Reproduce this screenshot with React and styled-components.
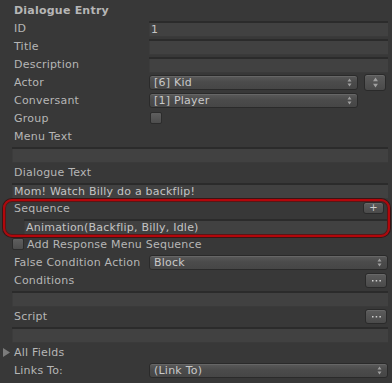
import React from 'react';
import styled, { createGlobalStyle } from 'styled-components';

const GlobalStyle = createGlobalStyle`
  html, body {
    margin: 0;
    padding: 0;
    background: #383838;
  }
  body {
    font-family: "DejaVu Sans", Verdana, sans-serif;
    font-size: 11px;
    letter-spacing: 0.22px;
    color: #b6b6b6;
  }
`;

const Panel = styled.div`
  width: 392px;
  height: 383px;
  box-sizing: border-box;
  padding: 1px 4px 0 12px;
  display: flex;
  flex-direction: column;
  overflow: hidden;
`;

const Row = styled.div`
  height: 18px;
  display: flex;
  align-items: center;
  flex-shrink: 0;
  padding-left: ${(p) => p.$indent || 0}px;
`;

const Label = styled.span`
  width: 137px;
  padding-left: 2px;
  box-sizing: border-box;
  white-space: nowrap;
  font-weight: ${(p) => (p.$bold ? 'bold' : 'normal')};
  flex: ${(p) => (p.$grow ? 1 : '0 0 137px')};
`;

const TextField = styled.div`
  flex: 1;
  height: 16px;
  box-sizing: border-box;
  background: #414141;
  border-top: 2px solid #2b2b2b;
  border-bottom: 1px solid #3a3a3a;
  box-shadow: inset 1px 0 0 #3c3c3c;
  color: #c4c4c4;
  padding: 0 2px;
  line-height: 13px;
  white-space: nowrap;
  overflow: hidden;
  margin-top: 1px;
`;

const Popup = styled.div`
  flex: ${(p) => (p.$width ? `0 0 ${p.$width}px` : 1)};
  height: 15px;
  box-sizing: border-box;
  border-radius: 3px;
  border: 1px solid #2a2a2a;
  background: linear-gradient(#5a5a5a, #4b4b4b 45%, #464646);
  box-shadow: inset 0 1px 0 #666;
  color: #c9c9c9;
  display: flex;
  align-items: center;
  justify-content: space-between;
  padding: 0 5px 0 4px;
  line-height: 13px;
  white-space: nowrap;
`;

const SmallButton = styled.div`
  width: ${(p) => p.$w || 22}px;
  height: ${(p) => p.$h || 14}px;
  box-sizing: border-box;
  border-radius: 3px;
  border: 1px solid #2a2a2a;
  background: linear-gradient(#5c5c5c, #4a4a4a);
  box-shadow: inset 0 1px 0 #686868;
  color: #d0d0d0;
  display: flex;
  align-items: center;
  justify-content: center;
  margin-left: auto;
  margin-right: ${(p) => p.$mr || 0}px;
  flex-shrink: 0;
  font-size: 10px;
  line-height: 1;
`;

const Checkbox = styled.div`
  width: 12px;
  height: 12px;
  box-sizing: border-box;
  border-radius: 2px;
  border: 1px solid #2c2c2c;
  background: linear-gradient(#5f5f5f, #4d4d4d);
  margin-left: ${(p) => p.$ml || 0}px;
  margin-right: ${(p) => p.$mr || 2}px;
  flex-shrink: 0;
`;

const Sequence = styled.div`
  position: relative;
  display: flex;
  flex-direction: column;

  &::after {
    content: '';
    position: absolute;
    left: -9px;
    right: -2px;
    top: 0px;
    bottom: -2px;
    border: 2px solid #b3060b;
    border-radius: 9px;
    box-shadow: 0 0 0 1px #3a1414, inset 0 0 0 1px #5a1616;
    pointer-events: none;
  }
`;

const Foldout = styled.svg`
  margin-left: -9px;
  margin-right: 2px;
  flex-shrink: 0;
`;

const UpDown = ({ big }) => (
  <svg width={big ? 7 : 5} height={big ? 11 : 9} viewBox="0 0 5 9">
    <path d="M2.5 0.5 L4.5 3.5 L0.5 3.5 Z M2.5 8.5 L4.5 5.5 L0.5 5.5 Z" fill="#a0a0a0" />
  </svg>
);

const Dots = () => (
  <svg width="9" height="3" viewBox="0 0 9 3">
    <rect x="0" y="1" width="1.5" height="1.5" fill="#cfcfcf" />
    <rect x="3.7" y="1" width="1.5" height="1.5" fill="#cfcfcf" />
    <rect x="7.4" y="1" width="1.5" height="1.5" fill="#cfcfcf" />
  </svg>
);

export default function App() {
  return (
    <>
      <GlobalStyle />
      <Panel>
        <Row>
          <Label $bold>Dialogue Entry</Label>
        </Row>
        <Row>
          <Label>ID</Label>
          <TextField>1</TextField>
        </Row>
        <Row>
          <Label>Title</Label>
          <TextField />
        </Row>
        <Row>
          <Label>Description</Label>
          <TextField />
        </Row>
        <Row>
          <Label>Actor</Label>
          <Popup $width={209}>
            [6] Kid
            <UpDown />
          </Popup>
          <SmallButton $h={17} $mr={2}>
            <UpDown big />
          </SmallButton>
        </Row>
        <Row>
          <Label>Conversant</Label>
          <Popup $width={209}>
            [1] Player
            <UpDown />
          </Popup>
        </Row>
        <Row>
          <Label>Group</Label>
          <Checkbox $ml={1} />
        </Row>
        <Row>
          <Label>Menu Text</Label>
        </Row>
        <Row>
          <TextField />
        </Row>
        <Row>
          <Label>Dialogue Text</Label>
        </Row>
        <Row>
          <TextField>Mom! Watch Billy do a backflip!</TextField>
        </Row>
        <Sequence>
          <Row>
            <Label $grow>Sequence</Label>
            <SmallButton $w={21} $h={12} $mr={4}>+</SmallButton>
          </Row>
          <Row $indent={12}>
            <TextField>Animation(Backflip, Billy, Idle)</TextField>
          </Row>
        </Sequence>
        <Row>
          <Checkbox $mr={3} />
          <span>Add Response Menu Sequence</span>
        </Row>
        <Row>
          <Label>False Condition Action</Label>
          <Popup>
            Block
            <UpDown />
          </Popup>
        </Row>
        <Row>
          <Label $grow>Conditions</Label>
          <SmallButton $h={15} $mr={1}>
            <Dots />
          </SmallButton>
        </Row>
        <Row>
          <TextField />
        </Row>
        <Row>
          <Label $grow>Script</Label>
          <SmallButton $h={15} $mr={1}>
            <Dots />
          </SmallButton>
        </Row>
        <Row>
          <TextField />
        </Row>
        <Row>
          <Foldout width="7" height="9" viewBox="0 0 7 9">
            <path d="M0 0 L7 4.5 L0 9 Z" fill="#7c7c7c" />
          </Foldout>
          <Label>All Fields</Label>
        </Row>
        <Row>
          <Label>Links To:</Label>
          <Popup>
            (Link To)
            <UpDown />
          </Popup>
        </Row>
      </Panel>
    </>
  );
}
